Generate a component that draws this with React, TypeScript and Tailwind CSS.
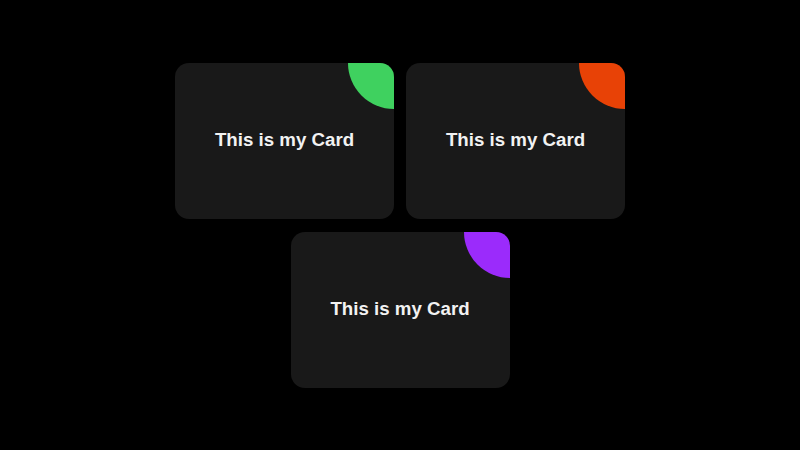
const cards = [
  { id: 1, accent: "bg-[#3fd15f]" },
  { id: 2, accent: "bg-[#e84206]" },
  { id: 3, accent: "bg-[#9b2bfb]" },
];

function Card({ accent }: { accent: string }) {
  return (
    <div className="relative flex h-[156px] w-[219px] items-center justify-center overflow-hidden rounded-[14px] bg-[#191919]">
      {/* quarter-circle accent tucked into the top-right corner */}
      <div
        className={`absolute right-0 top-0 h-[46px] w-[46px] rounded-bl-full ${accent}`}
      />
      <h3 className="text-[18.7px] font-bold text-[#f2f2f2]">This is my Card</h3>
    </div>
  );
}

export default function App() {
  return (
    <div
      className="flex h-screen w-full items-center justify-center bg-black"
      style={{ fontFamily: '"Liberation Sans", Arial, sans-serif' }}
    >
      <div className="flex w-[450px] flex-wrap justify-center gap-x-3 gap-y-[13px]">
        {cards.map((c) => (
          <Card key={c.id} accent={c.accent} />
        ))}
      </div>
    </div>
  );
}
